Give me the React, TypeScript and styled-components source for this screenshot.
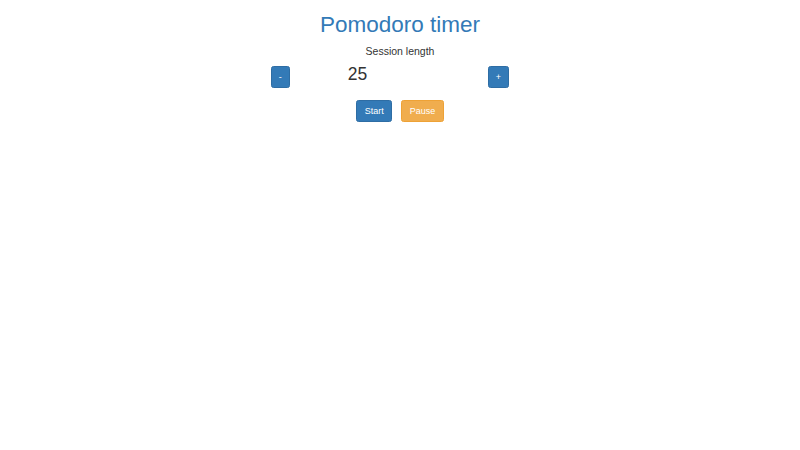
import styled, { createGlobalStyle } from "styled-components";

const GlobalStyle = createGlobalStyle`
  body {
    margin: 0;
    background: #fff;
    color: #333;
    font-family: "Liberation Sans", Arial, sans-serif;
    font-size: 10.5px;
  }
`;

export default function App() {
  return (
    <>
      <GlobalStyle />
      <Page>
        <Title>Pomodoro timer</Title>
        <Label>Session length</Label>
        <SessionRow>
          <StepButton>-</StepButton>
          <Minutes>25</Minutes>
          <StepButton>+</StepButton>
        </SessionRow>
        <Controls>
          <ActionButton $variant="primary">Start</ActionButton>
          <ActionButton $variant="warning">Pause</ActionButton>
        </Controls>
      </Page>
    </>
  );
}

const Page = styled.div`
  display: flex;
  flex-direction: column;
  align-items: center;
  padding-top: 13px;
`;

const Title = styled.h2`
  margin: 0;
  font-size: 22.5px;
  font-weight: 400;
  line-height: 1.1;
  color: #337ab7;
`;

const Label = styled.div`
  margin-top: 6px;
  font-size: 10.5px;
  line-height: 1.4;
  color: #333;
`;

const SessionRow = styled.div`
  display: grid;
  grid-template-columns: 77px 140px auto 20px;
  justify-items: start;
  align-items: start;
  margin-top: 8px;
`;

const Minutes = styled.div`
  font-size: 17.5px;
  line-height: 1;
  color: #333;
`;

const buttonColors = {
  primary: { bg: "#337ab7", border: "#2e6da4" },
  warning: { bg: "#f0ad4e", border: "#eea236" },
};

const StepButton = styled.button`
  height: 22px;
  padding: 0 7px;
  border: 1px solid #2e6da4;
  border-radius: 2.5px;
  background: #337ab7;
  color: #fff;
  font-family: inherit;
  font-size: 9px;
  line-height: 1;
  cursor: pointer;
`;

const Controls = styled.div`
  display: flex;
  gap: 9px;
  margin-top: 12px;
`;

const ActionButton = styled.button<{ $variant: "primary" | "warning" }>`
  height: 22px;
  padding: 0 7.5px;
  border: 1px solid ${(p) => buttonColors[p.$variant].border};
  border-radius: 2.5px;
  background: ${(p) => buttonColors[p.$variant].bg};
  color: #fff;
  font-family: inherit;
  font-size: 9px;
  line-height: 1;
  cursor: pointer;
`;
